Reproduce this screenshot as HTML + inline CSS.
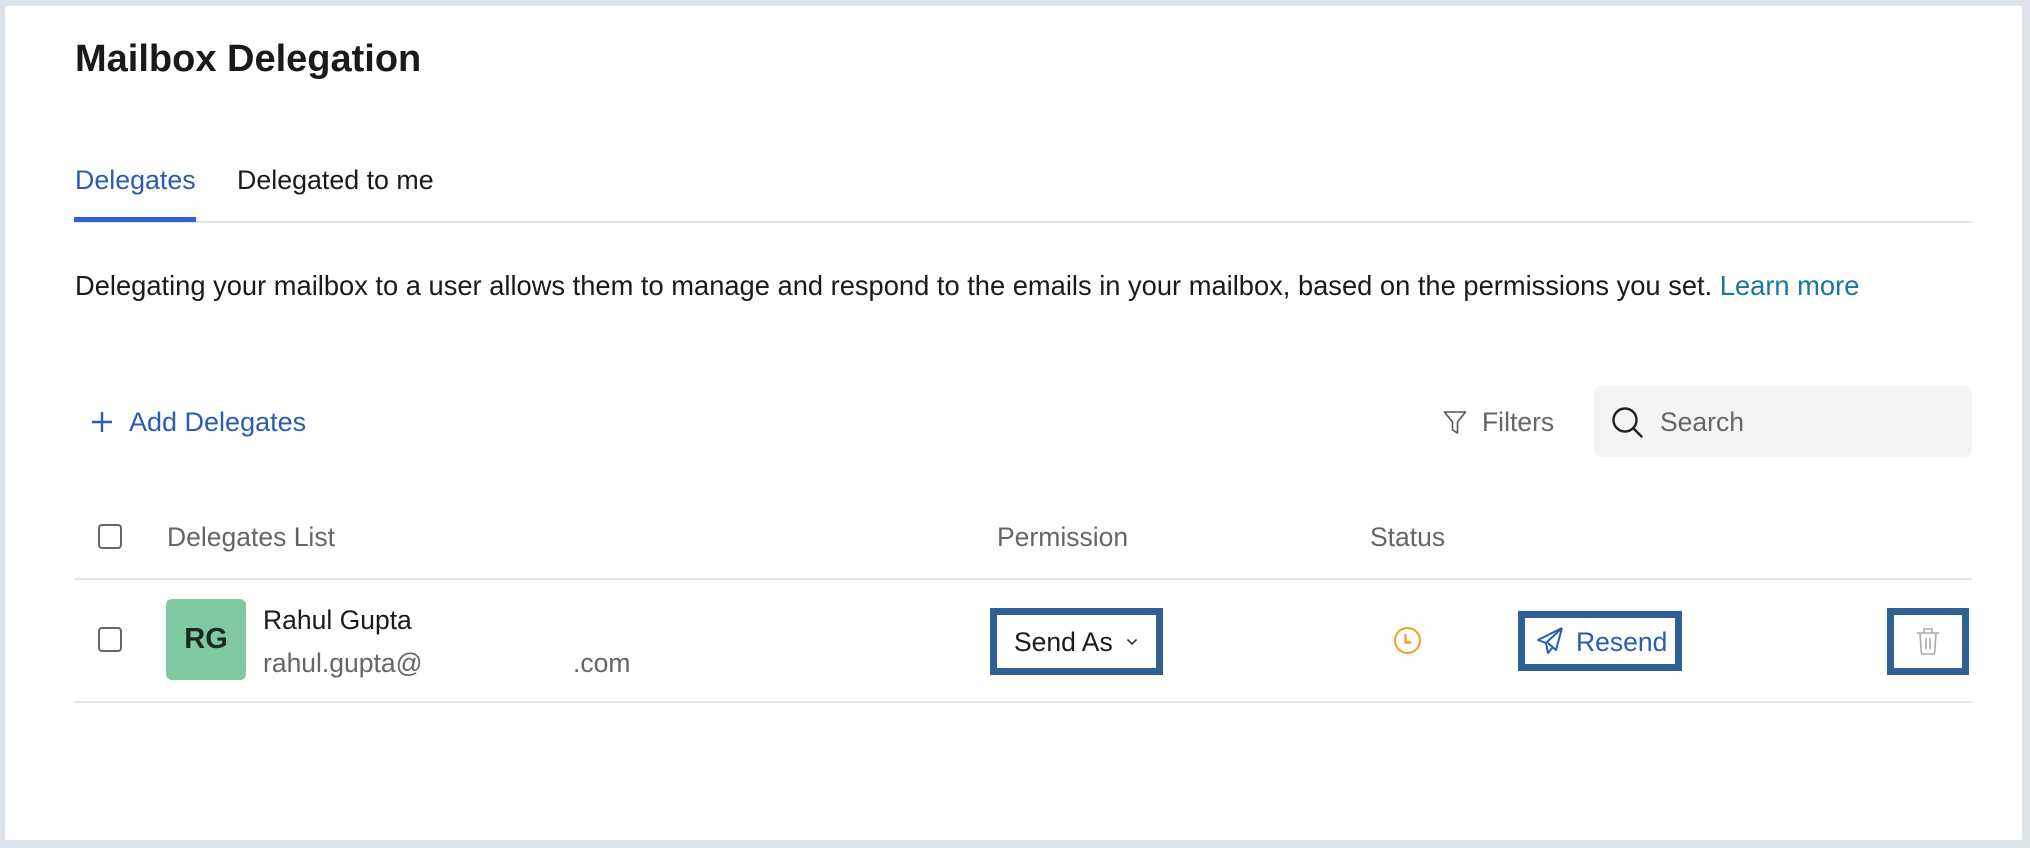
<!DOCTYPE html>
<html><head><meta charset="utf-8"><style>
*{margin:0;padding:0;box-sizing:border-box}
body{width:2030px;height:848px;background:#dde3ea;font-family:"Liberation Sans",sans-serif;position:relative;overflow:hidden}
.card{position:absolute;left:5px;top:6px;width:2017px;height:834px;background:#fff}
.a{position:absolute;white-space:nowrap;line-height:1}
.cb{position:absolute;width:24px;height:25px;border:2px solid #666;border-radius:4px}
.box{position:absolute;border:7px solid #2f5f93;background:#fff}
</style></head><body>
<div class="card"></div>
<div class="a" style="left:75px;top:40px;font-size:38px;font-weight:bold;color:#1a1a1a">Mailbox Delegation</div>
<div class="a" style="left:75px;top:167px;font-size:26.8px;color:#2b5bb3">Delegates</div>
<div class="a" style="left:237px;top:167px;font-size:26.8px;color:#1a1a1a">Delegated to me</div>
<div style="position:absolute;left:74px;top:221px;width:1898px;height:2px;background:#e2e2e2"></div>
<div style="position:absolute;left:74px;top:217px;width:122px;height:5px;background:#2e62d0"></div>
<div class="a" style="left:75px;top:272px;font-size:27.3px;color:#1a1a1a">Delegating your mailbox to a user allows them to manage and respond to the emails in your mailbox, based on the permissions you set. <span style="color:#17789f">Learn more</span></div>
<svg style="position:absolute;left:91px;top:411px" width="22" height="22" viewBox="0 0 22 22"><path d="M11 1v20M1 11h20" stroke="#2b5bb3" stroke-width="2.4"/></svg>
<div class="a" style="left:129px;top:409px;font-size:27px;color:#2b5bb3">Add Delegates</div>
<svg style="position:absolute;left:1443px;top:410px" width="24" height="26" viewBox="0 0 24 26"><path d="M1.5 2h21l-8 10v11l-5-3v-8z" fill="none" stroke="#555" stroke-width="1.6" stroke-linejoin="round"/></svg>
<div class="a" style="left:1482px;top:409px;font-size:26.5px;color:#666">Filters</div>
<div style="position:absolute;left:1594px;top:386px;width:378px;height:71px;background:#f4f4f4;border-radius:8px"></div>
<svg style="position:absolute;left:1611px;top:406px" width="34" height="34" viewBox="0 0 34 34"><circle cx="14" cy="14" r="11.5" fill="none" stroke="#222" stroke-width="2.4"/><path d="M22.5 22.5l8 8" stroke="#222" stroke-width="2.4" stroke-linecap="round"/></svg>
<div class="a" style="left:1660px;top:409px;font-size:26.5px;color:#666">Search</div>
<div class="cb" style="left:98px;top:524px"></div>
<div class="a" style="left:167px;top:524px;font-size:26.5px;color:#666">Delegates List</div>
<div class="a" style="left:997px;top:524px;font-size:26.5px;color:#666">Permission</div>
<div class="a" style="left:1370px;top:524px;font-size:26.5px;color:#666">Status</div>
<div style="position:absolute;left:74px;top:578px;width:1898px;height:2px;background:#e4e4e4"></div>
<div class="cb" style="left:98px;top:627px"></div>
<div style="position:absolute;left:166px;top:599px;width:80px;height:81px;background:#80c9a3;border-radius:6px;display:flex;align-items:center;justify-content:center;font-size:29px;font-weight:bold;color:#1a2a20">RG</div>
<div class="a" style="left:263px;top:607px;font-size:26.5px;color:#1a1a1a">Rahul Gupta</div>
<div class="a" style="left:263px;top:650px;font-size:26.5px;color:#666">rahul.gupta@</div>
<div class="a" style="left:573px;top:650px;font-size:26.5px;color:#666">.com</div>
<div class="box" style="left:990px;top:608px;width:173px;height:67px"></div>
<div class="a" style="left:1014px;top:629px;font-size:26.5px;color:#1a1a1a">Send As</div>
<svg style="position:absolute;left:1126px;top:638px" width="12" height="8" viewBox="0 0 12 8"><path d="M1.5 1.5l4.5 4.5 4.5-4.5" fill="none" stroke="#333" stroke-width="1.6"/></svg>
<svg style="position:absolute;left:1393px;top:626px" width="29" height="29" viewBox="0 0 29 29"><circle cx="14.5" cy="14.5" r="12.5" fill="none" stroke="#f0a02c" stroke-width="2"/><path d="M12.5 8v8.5h6" fill="none" stroke="#f0a02c" stroke-width="2.4"/></svg>
<div class="box" style="left:1518px;top:611px;width:164px;height:60px"></div>
<svg style="position:absolute;left:1535px;top:626px" width="30" height="30" viewBox="0 0 30 30"><path d="M27 2L3 14l8 3 2 10 5-6 M27 2L11 17 M27 2l-6 22-8-7" fill="none" stroke="#2b5bb3" stroke-width="2" stroke-linejoin="round"/></svg>
<div class="a" style="left:1576px;top:629px;font-size:26.5px;color:#2b5bb3">Resend</div>
<div class="box" style="left:1887px;top:608px;width:82px;height:67px"></div>
<svg style="position:absolute;left:1915px;top:627px" width="26" height="30" viewBox="0 0 26 30"><path d="M2 6h22M9 6V2h8v4M5 6l1.5 21h13L21 6M11 11v11M15 11v11" fill="none" stroke="#aaa" stroke-width="1.6"/></svg>
<div style="position:absolute;left:74px;top:701px;width:1898px;height:2px;background:#e4e4e4"></div>
</body></html>
